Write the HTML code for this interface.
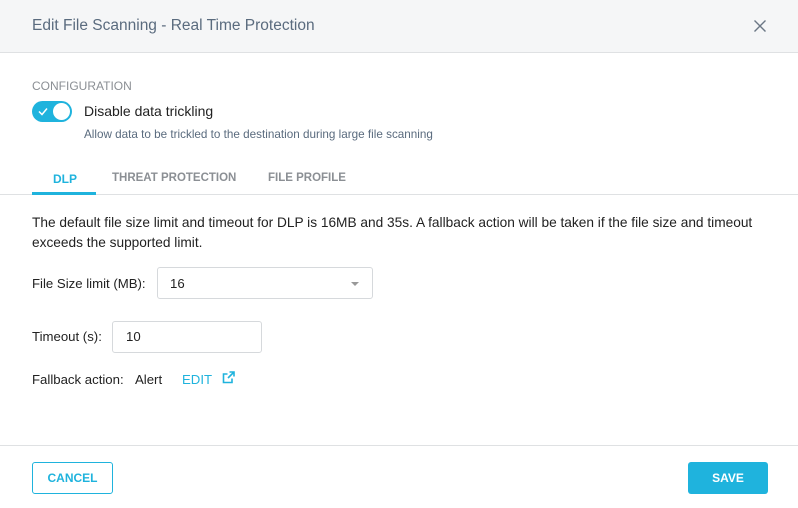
<!DOCTYPE html>
<html><head><style>
*{box-sizing:border-box;margin:0;padding:0}
body{width:798px;height:508px;background:#fff;font-family:"Liberation Sans",sans-serif;position:relative;overflow:hidden;color:#333}
.a{position:absolute;white-space:nowrap}
</style></head><body>
<div class="a" style="left:0;top:0;width:798px;height:53px;background:#f5f6f7;border-bottom:1px solid #dfe1e3"></div>
<div class="a" style="left:32px;top:17px;font-size:15.5px;color:#5a6b7e">Edit File Scanning - Real Time Protection</div>
<svg class="a" style="left:753px;top:19px" width="14" height="14" viewBox="0 0 14 14"><path d="M1.5 1.5L12.5 12.5M12.5 1.5L1.5 12.5" stroke="#6b7785" stroke-width="1.4"/></svg>
<div class="a" style="left:32px;top:79px;font-size:12px;color:#8b8f94">CONFIGURATION</div>
<div class="a" style="left:32px;top:101px;width:40px;height:21px;border-radius:11px;background:#1fb3dd"></div>
<div class="a" style="left:53px;top:103px;width:17px;height:17px;border-radius:50%;background:#fff"></div>
<svg class="a" style="left:38px;top:107px" width="10" height="9" viewBox="0 0 10 9"><path d="M1 4.5L4 7.5L9 1.5" stroke="#fff" stroke-width="1.5" fill="none"/></svg>
<div class="a" style="left:84px;top:103px;font-size:14px;color:#222">Disable data trickling</div>
<div class="a" style="left:84px;top:128px;font-size:11.7px;color:#5a6b7e">Allow data to be trickled to the destination during large file scanning</div>
<div class="a" style="left:0;top:194px;width:798px;height:1px;background:#dfe1e3"></div>
<div class="a" style="left:32px;top:192px;width:64px;height:3px;background:#1fb3dd"></div>
<div class="a" style="left:53px;top:172px;font-size:12px;font-weight:bold;color:#1fb3dd">DLP</div>
<div class="a" style="left:112px;top:172px;font-size:11.5px;font-weight:bold;color:#8b8f94">THREAT PROTECTION</div>
<div class="a" style="left:268px;top:172px;font-size:11.5px;font-weight:bold;color:#8b8f94">FILE PROFILE</div>
<div class="a" style="left:32px;top:213px;font-size:13.7px;color:#222;line-height:20px;white-space:normal;width:750px">The default file size limit and timeout for DLP is 16MB and 35s. A fallback action will be taken if the file size and timeout exceeds the supported limit.</div>
<div class="a" style="left:32px;top:276px;font-size:13.2px;color:#222">File Size limit (MB):</div>
<div class="a" style="left:157px;top:267px;width:216px;height:32px;border:1px solid #d6d9dc;border-radius:3px"></div>
<div class="a" style="left:170px;top:276px;font-size:13.2px;color:#222">16</div>
<div class="a" style="left:351px;top:282px;width:0;height:0;border-left:4px solid transparent;border-right:4px solid transparent;border-top:4px solid #999"></div>
<div class="a" style="left:32px;top:329px;font-size:13.2px;color:#222">Timeout (s):</div>
<div class="a" style="left:112px;top:321px;width:150px;height:32px;border:1px solid #d6d9dc;border-radius:3px"></div>
<div class="a" style="left:126px;top:329px;font-size:13.2px;color:#222">10</div>
<div class="a" style="left:32px;top:372px;font-size:13.2px;color:#222">Fallback action:</div>
<div class="a" style="left:135px;top:372px;font-size:13.2px;color:#222">Alert</div>
<div class="a" style="left:182px;top:372px;font-size:13.2px;color:#1fb3dd">EDIT</div>
<svg class="a" style="left:222px;top:371px" width="13" height="13" viewBox="0 0 13 13"><path d="M10 7.5V11.5H1.5V3H5.5M7.5 1H12V5.5M12 1L6 7" stroke="#1fb3dd" stroke-width="1.6" fill="none"/></svg>
<div class="a" style="left:0;top:445px;width:798px;height:1px;background:#dfe1e3"></div>
<div class="a" style="left:32px;top:462px;width:81px;height:32px;border:1px solid #1fb3dd;border-radius:3px;color:#1fb3dd;font-size:12px;font-weight:bold;text-align:center;line-height:30px">CANCEL</div>
<div class="a" style="left:688px;top:462px;width:80px;height:32px;background:#1fb3dd;border-radius:3px;color:#fff;font-size:12px;font-weight:bold;text-align:center;line-height:32px">SAVE</div>
</body></html>
